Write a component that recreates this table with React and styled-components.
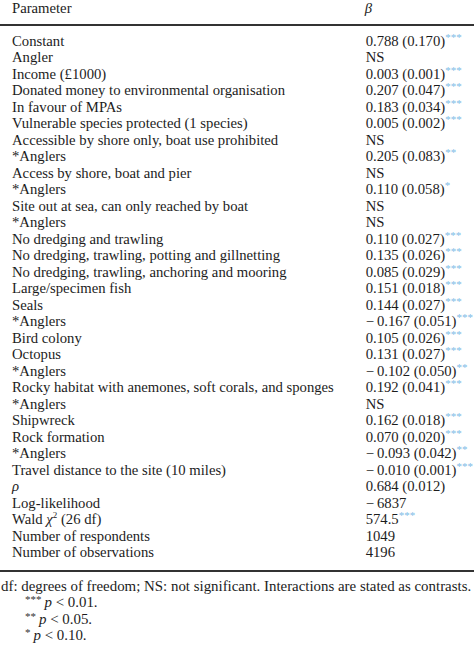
import React from 'react';
import styled, { createGlobalStyle } from 'styled-components';

const GlobalStyle = createGlobalStyle`
  html, body {
    margin: 0;
    padding: 0;
    background: #ffffff;
  }
  body {
    font-family: "Liberation Serif", "Times New Roman", serif;
    color: #1c1c1c;
  }
`;

const Page = styled.div`
  width: 474px;
  font-size: 14.7px;
  line-height: 16.5px;
`;

const Table = styled.table`
  width: 100%;
  border-collapse: collapse;
`;

const HeadCell = styled.th`
  text-align: left;
  font-weight: normal;
  padding: 0 0 7px ${props => (props.$value ? '0' : '12px')};
  width: ${props => (props.$value ? '107px' : 'auto')};
  border-bottom: 2.5px solid #333333;
`;

const Row = styled.tr`
  & > td {
    padding-top: ${props => (props.$first ? '7px' : '0')};
    padding-bottom: ${props => (props.$last ? '9px' : '0')};
  }
  &:last-child > td {
    border-bottom: 2.5px solid #333333;
  }
`;

const LabelCell = styled.td`
  padding-left: 12px;
  white-space: nowrap;
`;

const ValueCell = styled.td`
  white-space: nowrap;
`;

const Stars = styled.sup`
  color: #7dbbe6;
  font-size: 11px;
  line-height: 0;
  vertical-align: 5px;
`;

const Ital = styled.i`
  font-style: italic;
`;

const Minus = styled.span`
  margin-right: 3px;
`;

const Notes = styled.div`
  padding-top: 6px;
  font-size: 14.9px;
  line-height: 16.5px;
`;

const NoteLine = styled.div`
  padding-left: ${props => (props.$indent ? '25px' : '1px')};
  white-space: nowrap;
`;

const NoteStars = styled.sup`
  font-size: 11px;
  line-height: 0;
  vertical-align: 4px;
  margin-right: 3px;
  color: #333333;
`;

const rows = [
  ['Constant', '0.788 (0.170)', '***'],
  ['Angler', 'NS'],
  ['Income (£1000)', '0.003 (0.001)', '***'],
  ['Donated money to environmental organisation', '0.207 (0.047)', '***'],
  ['In favour of MPAs', '0.183 (0.034)', '***'],
  ['Vulnerable species protected (1 species)', '0.005 (0.002)', '***'],
  ['Accessible by shore only, boat use prohibited', 'NS'],
  ['*Anglers', '0.205 (0.083)', '**'],
  ['Access by shore, boat and pier', 'NS'],
  ['*Anglers', '0.110 (0.058)', '*'],
  ['Site out at sea, can only reached by boat', 'NS'],
  ['*Anglers', 'NS'],
  ['No dredging and trawling', '0.110 (0.027)', '***'],
  ['No dredging, trawling, potting and gillnetting', '0.135 (0.026)', '***'],
  ['No dredging, trawling, anchoring and mooring', '0.085 (0.029)', '***'],
  ['Large/specimen fish', '0.151 (0.018)', '***'],
  ['Seals', '0.144 (0.027)', '***'],
  ['*Anglers', '-0.167 (0.051)', '***'],
  ['Bird colony', '0.105 (0.026)', '***'],
  ['Octopus', '0.131 (0.027)', '***'],
  ['*Anglers', '-0.102 (0.050)', '**'],
  ['Rocky habitat with anemones, soft corals, and sponges', '0.192 (0.041)', '***'],
  ['*Anglers', 'NS'],
  ['Shipwreck', '0.162 (0.018)', '***'],
  ['Rock formation', '0.070 (0.020)', '***'],
  ['*Anglers', '-0.093 (0.042)', '**'],
  ['Travel distance to the site (10 miles)', '-0.010 (0.001)', '***'],
  [<Ital>ρ</Ital>, '0.684 (0.012)'],
  ['Log-likelihood', '-6837'],
  [<>Wald <Ital>χ</Ital><sup style={{ fontSize: '9px', lineHeight: 0 }}>2</sup> (26 df)</>, '574.5', '***'],
  ['Number of respondents', '1049'],
  ['Number of observations', '4196'],
];

const Value = ({ text, stars }) => {
  const negative = text.startsWith('-');
  return (
    <>
      {negative && <Minus>−</Minus>}
      {negative ? text.slice(1) : text}
      {stars && <Stars>{stars}</Stars>}
    </>
  );
};

const App = () => (
  <Page>
    <GlobalStyle />
    <Table>
      <thead>
        <tr>
          <HeadCell>Parameter</HeadCell>
          <HeadCell $value><Ital>β</Ital></HeadCell>
        </tr>
      </thead>
      <tbody>
        {rows.map(([label, value, stars], i) => (
          <Row key={i} $first={i === 0} $last={i === rows.length - 1}>
            <LabelCell>{label}</LabelCell>
            <ValueCell><Value text={value} stars={stars} /></ValueCell>
          </Row>
        ))}
      </tbody>
    </Table>
    <Notes>
      <NoteLine>df: degrees of freedom; NS: not significant. Interactions are stated as contrasts.</NoteLine>
      <NoteLine $indent><NoteStars>***</NoteStars><Ital>p</Ital> &lt; 0.01.</NoteLine>
      <NoteLine $indent><NoteStars>**</NoteStars><Ital>p</Ital> &lt; 0.05.</NoteLine>
      <NoteLine $indent><NoteStars>*</NoteStars><Ital>p</Ital> &lt; 0.10.</NoteLine>
    </Notes>
  </Page>
);

export default App;
